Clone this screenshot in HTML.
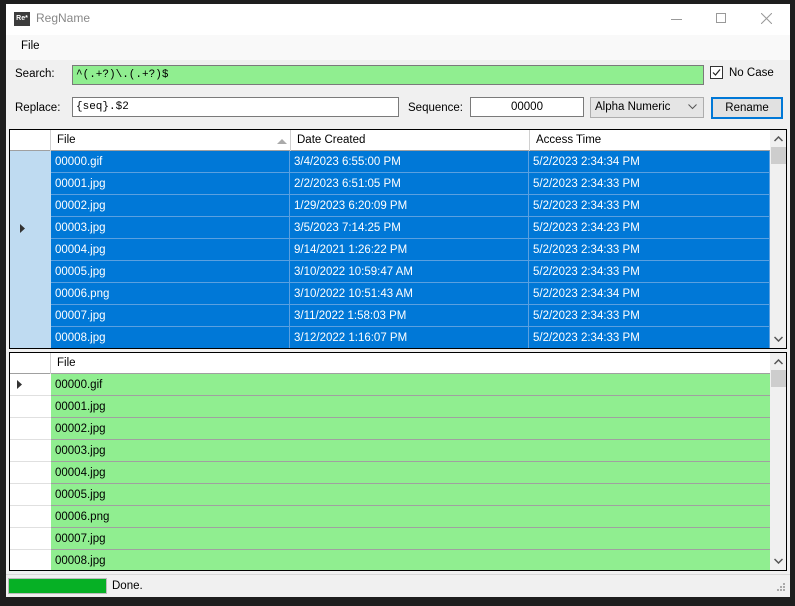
<!DOCTYPE html>
<html><head><meta charset="utf-8"><style>
*{box-sizing:border-box;margin:0;padding:0}
body{width:795px;height:606px;background:#1e1e1e;position:relative;overflow:hidden;font-family:"Liberation Sans",sans-serif;font-size:11.5px;color:#000}
.a{position:absolute}
.win{left:6px;top:4px;width:784px;height:593px;background:#f0f0f0}
.mono{font-family:"Liberation Mono",monospace;font-size:12px}
.grid{background:#fff;border:1px solid #000}
.hdr{background:#fff;height:21px;border-bottom:1px solid #a0a0a0}
.hc{position:absolute;top:0;height:21px;line-height:21px;padding-left:6px;border-left:1px solid #d0d0d0}
.row{position:absolute;left:41px;height:22px;line-height:22px}
.sel .c{background:#0078d7;color:#fff;border-bottom:1px solid #5aa0e0;border-right:1px solid #5aa0e0}
.c{position:absolute;top:0;height:22px;padding-left:4px;white-space:nowrap}
.g .c{background:#90ee90;border-bottom:1px solid #a0a0a0}
.sb{position:absolute;background:#f0f0f0;width:17px}
</style></head><body>
<div class="a win"></div>
<div class="a" style="left:6px;top:4px;width:784px;height:31px;background:#fff"></div>
<div class="a" style="left:14px;top:12px;width:16px;height:14px;background:#3c3c3c;color:#fff;font-size:7px;font-weight:bold;line-height:14px;text-align:center">Re*</div>
<div class="a" style="left:36px;top:11px;font-size:12px;color:#888">RegName</div>
<div class="a" style="left:671px;top:19px;width:11px;height:1px;background:#999"></div>
<div class="a" style="left:716px;top:13px;width:10px;height:10px;border:1px solid #999"></div>
<svg class="a" style="left:761px;top:13px" width="11" height="11"><path d="M0 0L11 11M11 0L0 11" stroke="#999" stroke-width="1"/></svg>
<div class="a" style="left:6px;top:35px;width:784px;height:25px;background:#f9f9f9"></div>
<div class="a" style="left:21px;top:40px">File</div>
<div class="a" style="left:15px;top:68px">Search:</div>
<div class="a mono" style="left:72px;top:65px;width:632px;height:20px;background:#90ee90;border:1px solid #7a7a7a;padding:3px 3px;font-size:11px">^(.+?)\.(.+?)$</div>
<div class="a" style="left:710px;top:66px;width:13px;height:13px;border:1px solid #333;background:#fff"></div>
<svg class="a" style="left:711px;top:67px" width="11" height="11"><path d="M2 5.5L4.5 8L9 2.5" stroke="#222" fill="none" stroke-width="1.2"/></svg>
<div class="a" style="left:729px;top:67px">No Case</div>
<div class="a" style="left:15px;top:102px">Replace:</div>
<div class="a mono" style="left:72px;top:97px;width:327px;height:20px;background:#fff;border:1px solid #7a7a7a;padding:3px 3px;font-size:11px">{seq}.$2</div>
<div class="a" style="left:408px;top:102px">Sequence:</div>
<div class="a" style="left:470px;top:97px;width:114px;height:20px;background:#fff;border:1px solid #7a7a7a;text-align:center;line-height:18px">00000</div>
<div class="a" style="left:590px;top:97px;width:114px;height:21px;background:#e5e5e5;border:1px solid #adadad;padding-left:4px;line-height:19px">Alpha Numeric</div>
<svg class="a" style="left:688px;top:104px" width="9" height="6"><path d="M0.5 0.5L4.5 4.5L8.5 0.5" stroke="#555" fill="none"/></svg>
<div class="a" style="left:711px;top:97px;width:72px;height:22px;background:#e1e1e1;border:2px solid #0078d7;text-align:center;line-height:18px">Rename</div>

<div class="a grid" style="left:9px;top:129px;width:778px;height:220px;overflow:hidden">
 <div class="a" style="left:0;top:21px;width:41px;height:198px;background:#bfdbf1"></div>
 <div class="a hdr" style="left:0;top:0;width:760px"></div>
 <div class="hc" style="left:40px;width:240px">File</div>
 <svg class="a" style="left:267px;top:8px" width="10" height="6"><path d="M0 6L5 1L10 6Z" fill="#aaa"/></svg>
 <div class="hc" style="left:280px;width:239px">Date Created</div>
 <div class="hc" style="left:519px;width:241px">Access Time</div>
 <svg class="a" style="left:10px;top:94px" width="6" height="9"><path d="M0 0L5 4.5L0 9Z" fill="#333"/></svg>
 <div class="sb" style="left:760px;top:0;height:218px"></div>
 <div class="a" style="left:761px;top:17px;width:15px;height:17px;background:#cdcdcd"></div>
 <svg class="a" style="left:764px;top:6px" width="9" height="6"><path d="M0.5 5L4.5 1L8.5 5" stroke="#555" fill="none" stroke-width="1.5"/></svg>
 <svg class="a" style="left:764px;top:206px" width="9" height="6"><path d="M0.5 1L4.5 5L8.5 1" stroke="#555" fill="none" stroke-width="1.5"/></svg>
 <div id="top"></div>
</div>

<div class="a grid" style="left:9px;top:352px;width:778px;height:219px;overflow:hidden">
 <div class="a hdr" style="left:0;top:0;width:760px"></div>
 <div class="hc" style="left:40px;width:720px">File</div>
 <svg class="a" style="left:7px;top:27px" width="6" height="9"><path d="M0 0L5 4.5L0 9Z" fill="#333"/></svg>
 <div class="sb" style="left:760px;top:0;height:217px"></div>
 <div class="a" style="left:761px;top:17px;width:15px;height:17px;background:#cdcdcd"></div>
 <svg class="a" style="left:764px;top:6px" width="9" height="6"><path d="M0.5 5L4.5 1L8.5 5" stroke="#555" fill="none" stroke-width="1.5"/></svg>
 <svg class="a" style="left:764px;top:205px" width="9" height="6"><path d="M0.5 1L4.5 5L8.5 1" stroke="#555" fill="none" stroke-width="1.5"/></svg>
</div>

<div class="a" style="left:6px;top:574px;width:784px;height:1px;background:#d8d8d8"></div>
<div class="a" style="left:8px;top:578px;width:99px;height:16px;background:#06b025;border:1px solid #bcbcbc"></div>
<div class="a" style="left:112px;top:580px">Done.</div>
<svg class="a" style="left:776px;top:582px" width="10" height="10" fill="#aaa"><rect x="7" y="1" width="2" height="2"/><rect x="4" y="4" width="2" height="2"/><rect x="7" y="4" width="2" height="2"/><rect x="1" y="7" width="2" height="2"/><rect x="4" y="7" width="2" height="2"/><rect x="7" y="7" width="2" height="2"/></svg>

<script>
var d=[["00000.gif","3/4/2023 6:55:00 PM","5/2/2023 2:34:34 PM"],["00001.jpg","2/2/2023 6:51:05 PM","5/2/2023 2:34:33 PM"],["00002.jpg","1/29/2023 6:20:09 PM","5/2/2023 2:34:33 PM"],["00003.jpg","3/5/2023 7:14:25 PM","5/2/2023 2:34:23 PM"],["00004.jpg","9/14/2021 1:26:22 PM","5/2/2023 2:34:33 PM"],["00005.jpg","3/10/2022 10:59:47 AM","5/2/2023 2:34:33 PM"],["00006.png","3/10/2022 10:51:43 AM","5/2/2023 2:34:34 PM"],["00007.jpg","3/11/2022 1:58:03 PM","5/2/2023 2:34:33 PM"],["00008.jpg","3/12/2022 1:16:07 PM","5/2/2023 2:34:33 PM"]];
var t='',b='';
d.forEach(function(r,i){
 var y=21+i*22;
 t+='<div class="row sel" style="top:'+y+'px"><div class="c" style="left:0;width:239px">'+r[0]+'</div><div class="c" style="left:239px;width:239px">'+r[1]+'</div><div class="c" style="left:478px;width:241px">'+r[2]+'</div></div>';
 b+='<div class="row g" style="top:'+y+'px"><div class="c" style="left:0;width:719px">'+r[0]+'</div></div><div class="a" style="left:0;top:'+(y+21)+'px;width:41px;height:1px;background:#e0e0e0"></div>';
});
document.getElementById('top').outerHTML=t;
document.querySelectorAll('.grid')[1].insertAdjacentHTML('beforeend',b);
</script>
</body></html>
